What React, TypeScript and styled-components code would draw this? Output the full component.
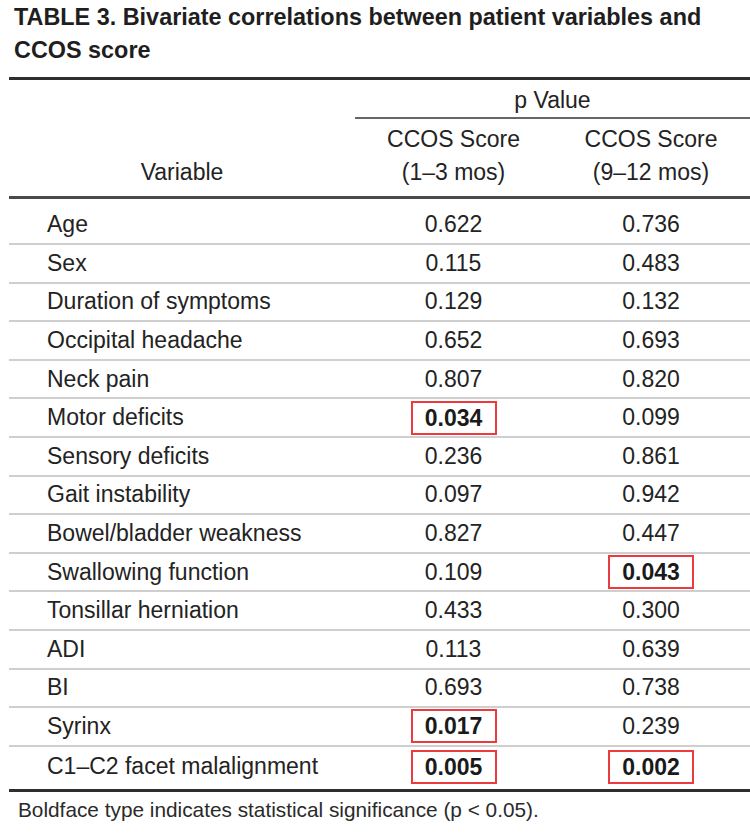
import React from "react";
import styled, { createGlobalStyle } from "styled-components";

const GlobalStyle = createGlobalStyle`
  body {
    margin: 0;
    background: #ffffff;
    font-family: "Liberation Sans", Arial, sans-serif;
    color: #232323;
  }
`;

const Page = styled.div`
  width: 750px;
  height: 840px;
  overflow: hidden;
  background: #ffffff;
`;

const Title = styled.h1`
  margin: 0;
  padding: 1px 0 0 14px;
  font-size: 23.4px;
  line-height: 33px;
  font-weight: 700;
  color: #1e1e1e;
`;

const Table = styled.div`
  margin: 10px 0 0 9px;
  width: 741px;
  border-top: 3px solid #2e2e2e;
  border-bottom: 3px solid #2e2e2e;
`;

const HeadGroup = styled.div`
  display: grid;
  grid-template-columns: 346px 395px;
  border-bottom: 3px solid #4a4a4a;
`;

const HeadVariable = styled.div`
  display: flex;
  align-items: flex-end;
  justify-content: center;
  padding-bottom: 7px;
  font-size: 23px;
  line-height: 33px;
`;

const HeadRight = styled.div`
  display: flex;
  flex-direction: column;
`;

const Spanner = styled.div`
  text-align: center;
  font-size: 23px;
  line-height: 33px;
  padding-top: 4px;
  border-bottom: 2px solid #666;
`;

const SubHeads = styled.div`
  display: grid;
  grid-template-columns: 197px 198px;
  padding: 4px 0 7px;
`;

const SubHead = styled.div`
  text-align: center;
  font-size: 23px;
  line-height: 33px;
`;

const Row = styled.div<{ $first?: boolean; $last?: boolean }>`
  display: grid;
  grid-template-columns: 346px 197px 198px;
  align-items: center;
  height: ${(p) => (p.$first ? "46px" : p.$last ? "42px" : "38.6px")};
  padding-top: ${(p) => (p.$first ? "7px" : "0")};
  padding-bottom: ${(p) => (p.$last ? "2px" : "0")};
  box-sizing: border-box;
  border-bottom: ${(p) => (p.$last ? "none" : "2px solid #cfcfcf")};
  font-size: 23px;
`;

const Label = styled.div`
  padding-left: 38px;
`;

const Value = styled.div`
  display: flex;
  justify-content: center;
`;

const Marked = styled.span`
  display: inline-block;
  box-sizing: border-box;
  width: 86px;
  height: 34px;
  line-height: 30px;
  text-align: center;
  border: 2px solid #ec3b3f;
  font-weight: 700;
  color: #1a1a1a;
`;

const Note = styled.p`
  margin: 5px 0 0 18px;
  font-size: 20.8px;
  line-height: 26px;
  color: #2a2a2a;
`;

type Cell = { v: string; bold?: boolean };

const rows: { label: string; a: Cell; b: Cell }[] = [
  { label: "Age", a: { v: "0.622" }, b: { v: "0.736" } },
  { label: "Sex", a: { v: "0.115" }, b: { v: "0.483" } },
  { label: "Duration of symptoms", a: { v: "0.129" }, b: { v: "0.132" } },
  { label: "Occipital headache", a: { v: "0.652" }, b: { v: "0.693" } },
  { label: "Neck pain", a: { v: "0.807" }, b: { v: "0.820" } },
  { label: "Motor deficits", a: { v: "0.034", bold: true }, b: { v: "0.099" } },
  { label: "Sensory deficits", a: { v: "0.236" }, b: { v: "0.861" } },
  { label: "Gait instability", a: { v: "0.097" }, b: { v: "0.942" } },
  { label: "Bowel/bladder weakness", a: { v: "0.827" }, b: { v: "0.447" } },
  { label: "Swallowing function", a: { v: "0.109" }, b: { v: "0.043", bold: true } },
  { label: "Tonsillar herniation", a: { v: "0.433" }, b: { v: "0.300" } },
  { label: "ADI", a: { v: "0.113" }, b: { v: "0.639" } },
  { label: "BI", a: { v: "0.693" }, b: { v: "0.738" } },
  { label: "Syrinx", a: { v: "0.017", bold: true }, b: { v: "0.239" } },
  { label: "C1–C2 facet malalignment", a: { v: "0.005", bold: true }, b: { v: "0.002", bold: true } },
];

const ValueCell = ({ cell }: { cell: Cell }) => (
  <Value>{cell.bold ? <Marked>{cell.v}</Marked> : cell.v}</Value>
);

export default function App() {
  return (
    <Page>
      <GlobalStyle />
      <Title>
        TABLE 3. Bivariate correlations between patient variables and
        <br />
        CCOS score
      </Title>
      <Table>
        <HeadGroup>
          <HeadVariable>Variable</HeadVariable>
          <HeadRight>
            <Spanner>p Value</Spanner>
            <SubHeads>
              <SubHead>
                CCOS Score
                <br />
                (1–3 mos)
              </SubHead>
              <SubHead>
                CCOS Score
                <br />
                (9–12 mos)
              </SubHead>
            </SubHeads>
          </HeadRight>
        </HeadGroup>
        {rows.map((r, i) => (
          <Row key={r.label} $first={i === 0} $last={i === rows.length - 1}>
            <Label>{r.label}</Label>
            <ValueCell cell={r.a} />
            <ValueCell cell={r.b} />
          </Row>
        ))}
      </Table>
      <Note>Boldface type indicates statistical significance (p &lt; 0.05).</Note>
    </Page>
  );
}
